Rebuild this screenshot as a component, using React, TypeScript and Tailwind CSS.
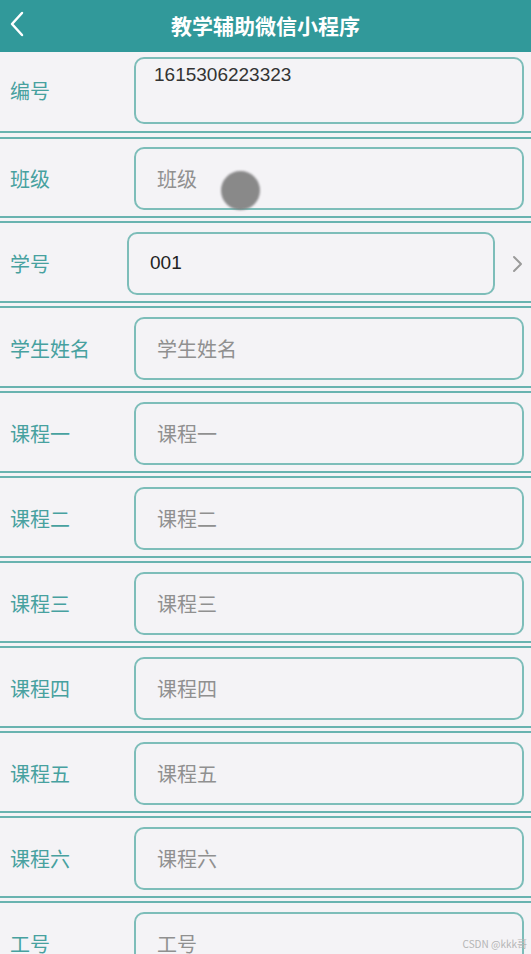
import React from 'react';

const cjk = { fontFamily: '"Noto Sans CJK SC", "Noto Sans", sans-serif' };
const latin = { fontFamily: '"Liberation Sans", Arial, "Noto Sans CJK SC", sans-serif' };

interface Field {
  label: string;
  value?: string;
  placeholder?: string;
}

const fields: Field[] = [
  { label: '学生姓名', placeholder: '学生姓名' },
  { label: '课程一', placeholder: '课程一' },
  { label: '课程二', placeholder: '课程二' },
  { label: '课程三', placeholder: '课程三' },
  { label: '课程四', placeholder: '课程四' },
  { label: '课程五', placeholder: '课程五' },
  { label: '课程六', placeholder: '课程六' },
  { label: '工号', placeholder: '工号' },
];

const Label: React.FC<{ text: string }> = ({ text }) => (
  <div className="w-[134px] shrink-0 pl-[10px] text-[20px] text-[#47a19f]" style={cjk}>
    {text}
  </div>
);

const Row: React.FC<{ field: Field }> = ({ field }) => (
  <div className="mt-[3px] flex items-center border-y-2 border-[#69b3b0] pt-[9px] pb-[6px]">
    <Label text={field.label} />
    <div className="mr-[7px] flex h-[63px] flex-1 items-center rounded-[10px] border-2 border-[#7dbdb9] pl-[21px]">
      <span className="text-[20px] text-[#909090]" style={cjk}>
        {field.placeholder}
      </span>
    </div>
  </div>
);

const App: React.FC = () => {
  return (
    <div className="relative min-h-[954px] w-[531px] overflow-hidden bg-[#f4f3f6]">
      <div className="relative flex h-[52px] items-center justify-center bg-[#31999a]">
        <svg className="absolute left-[9px] top-[11px]" width="16" height="26" viewBox="0 0 16 26">
          <polyline points="13,2 3,13 13,24" fill="none" stroke="#ffffff" strokeWidth="2.5" strokeLinejoin="round" strokeLinecap="round" />
        </svg>
        <span className="text-[21px] font-bold text-white" style={cjk}>
          教学辅助微信小程序
        </span>
      </div>

      <div className="flex items-center border-b-2 border-[#69b3b0] pt-[5px] pb-[7px]">
        <Label text="编号" />
        <div className="mr-[7px] h-[67px] flex-1 rounded-[10px] border-2 border-[#7dbdb9] pl-[18px] pt-[4px]">
          <span className="text-[19px] leading-[22px] text-[#333333]" style={latin}>
            1615306223323
          </span>
        </div>
      </div>

      <div className="mt-[4px] flex items-center border-y-2 border-[#69b3b0] pt-[8px] pb-[6px]">
        <Label text="班级" />
        <div className="relative mr-[7px] flex h-[63px] flex-1 items-center rounded-[10px] border-2 border-[#7dbdb9] pl-[21px]">
          <span className="text-[20px] text-[#909090]" style={cjk}>
            班级
          </span>
        </div>
      </div>

      <div className="mt-[3px] flex items-center border-y-2 border-[#69b3b0] pt-[9px] pb-[6px]">
        <div className="w-[127px] shrink-0 pl-[10px] text-[20px] text-[#47a19f]" style={cjk}>
          学号
        </div>
        <div className="flex h-[63px] w-[368px] items-center rounded-[10px] border-2 border-[#7dbdb9] pl-[21px]">
          <span className="text-[19px] text-[#222222]" style={latin}>
            001
          </span>
        </div>
        <div className="flex flex-1 justify-end pr-[8px]">
          <svg width="12" height="20" viewBox="0 0 12 20">
            <polyline points="3,3 10,10 3,17" fill="none" stroke="#9a9a9a" strokeWidth="2" strokeLinecap="round" strokeLinejoin="round" />
          </svg>
        </div>
      </div>

      {fields.map((f) => (
        <Row key={f.label} field={f} />
      ))}

      <div className="absolute left-[221px] top-[171px] h-[39px] w-[39px] rounded-full bg-[#7e7e7e] opacity-90 blur-[1px]" />

      <div className="absolute right-[4px] top-[936px] text-[10px] text-[#b5b5b5]" style={cjk}>
        CSDN @kkk哥
      </div>
    </div>
  );
};

export default App;
